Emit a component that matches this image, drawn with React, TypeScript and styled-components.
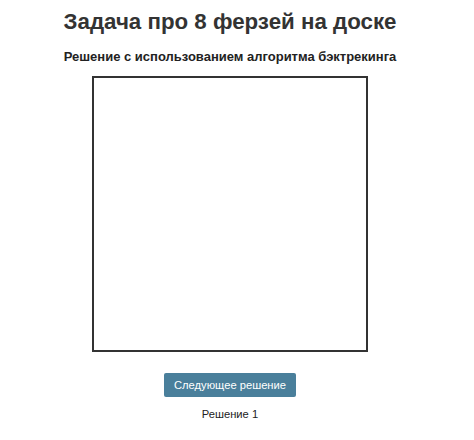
import React, { useState } from "react";
import styled, { createGlobalStyle } from "styled-components";

const Global = createGlobalStyle`
  html, body { margin: 0; padding: 0; background: #ffffff; }
  body { font-family: "Liberation Sans", Arial, Helvetica, sans-serif; color: #333333; }
`;

const Page = styled.div`
  width: 460px;
  display: flex;
  flex-direction: column;
  align-items: center;
  padding-top: 8px;
`;

const Title = styled.h1`
  margin: 0;
  font-size: 22.3px;
  line-height: 28px;
  font-weight: bold;
  color: #333333;
`;

const Subtitle = styled.h2`
  margin: 12px 0 0 0;
  font-size: 13px;
  line-height: 18px;
  font-weight: bold;
  color: #222222;
`;

const Board = styled.div`
  margin-top: 10px;
  width: 272px;
  height: 272px;
  border: 2px solid #333333;
  background: #ffffff;
`;

const NextButton = styled.button`
  margin-top: 21px;
  width: 132px;
  height: 24px;
  border: none;
  border-radius: 2px;
  background: #4a7f9b;
  color: #ffffff;
  font-family: "Liberation Sans", Arial, sans-serif;
  font-size: 11.2px;
  padding: 0;
  cursor: pointer;
`;

const Counter = styled.div`
  margin-top: 10px;
  font-size: 11.2px;
  line-height: 14px;
  color: #222222;
`;

export default function App() {
  const [n, setN] = useState(1);
  return (
    <>
      <Global />
      <Page>
        <Title>Задача про 8 ферзей на доске</Title>
        <Subtitle>Решение с использованием алгоритма бэктрекинга</Subtitle>
        <Board />
        <NextButton onClick={() => setN(n + 1)}>Следующее решение</NextButton>
        <Counter>Решение {n}</Counter>
      </Page>
    </>
  );
}
